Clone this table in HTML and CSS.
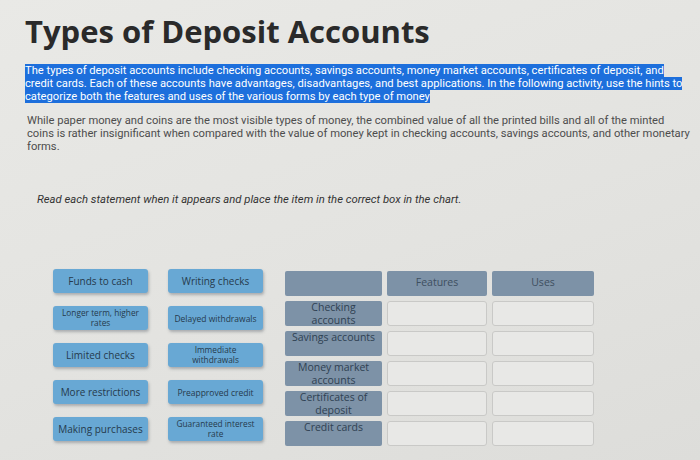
FILE: index.html
```html
<!DOCTYPE html>
<html lang="en">
<head>
<meta charset="utf-8">
<title>Types of Deposit Accounts</title>
<link rel="stylesheet" href="styles.css">
</head>
<body>
<div class="page">
  <h1 class="title">Types of Deposit Accounts</h1>
  <p class="intro"><span class="sel">The types of deposit accounts include checking accounts, savings accounts, money market accounts, certificates of deposit, and<br>credit cards. Each of these accounts have advantages, disadvantages, and best applications. In the following activity, use the hints to<br>categorize both the features and uses of the various forms by each type of money</span></p>
  <p class="body">While paper money and coins are the most visible types of money, the combined value of all the printed bills and all of the minted<br>coins is rather insignificant when compared with the value of money kept in checking accounts, savings accounts, and other monetary<br>forms.</p>
  <p class="instr">Read each statement when it appears and place the item in the correct box in the chart.</p>

  <div class="activity">
    <div class="tiles">
      <div class="tile">Funds to cash</div>
      <div class="tile">Writing checks</div>
      <div class="tile tile-sm">Longer term, higher rates</div>
      <div class="tile tile-md">Delayed withdrawals</div>
      <div class="tile">Limited checks</div>
      <div class="tile tile-sm">Immediate withdrawals</div>
      <div class="tile">More restrictions</div>
      <div class="tile tile-md">Preapproved credit</div>
      <div class="tile">Making purchases</div>
      <div class="tile tile-sm">Guaranteed interest rate</div>
    </div>

    <div class="chart">
      <div class="head"></div>
      <div class="head">Features</div>
      <div class="head">Uses</div>

      <div class="label">Checking accounts</div>
      <div class="slot"></div>
      <div class="slot"></div>

      <div class="label">Savings accounts</div>
      <div class="slot"></div>
      <div class="slot"></div>

      <div class="label">Money market accounts</div>
      <div class="slot"></div>
      <div class="slot"></div>

      <div class="label">Certificates of deposit</div>
      <div class="slot"></div>
      <div class="slot"></div>

      <div class="label">Credit cards</div>
      <div class="slot"></div>
      <div class="slot"></div>
    </div>
  </div>
</div>
</body>
</html>
```

FILE: styles.css
```css
html, body {
  margin: 0;
  padding: 0;
}

body {
  width: 700px;
  height: 460px;
  overflow: hidden;
  background: linear-gradient(160deg, #e9e9e6 0%, #e3e3e0 55%, #dddddA 100%);
  font-family: Roboto, "Liberation Sans", sans-serif;
}

.page {
  padding-left: 25px;
}

.title {
  margin: 12px 0 0 0;
  font-family: "Open Sans", "Liberation Sans", sans-serif;
  font-weight: 700;
  font-size: 31px;
  line-height: 38px;
  color: #2a2a2a;
}

.intro {
  margin: 14px 0 0 0;
  font-size: 11.2px;
  line-height: 13px;
  color: #ffffff;
}

.sel {
  background: #1d6fdc;
}

.body {
  margin: 11px 0 0 2px;
  font-size: 11.2px;
  line-height: 13px;
  color: #4d4d4d;
}

.instr {
  margin: 40px 0 0 12px;
  font-size: 11.3px;
  line-height: 13px;
  font-style: italic;
  color: #333333;
}

.activity {
  display: flex;
  align-items: flex-start;
  margin-top: 63px;
  padding-left: 28px;
}

.tiles {
  display: grid;
  grid-template-columns: 95px 95px;
  grid-auto-rows: 24px;
  column-gap: 20px;
  row-gap: 13px;
}

.tile {
  display: flex;
  align-items: center;
  justify-content: center;
  text-align: center;
  background: #68a8d4;
  border-radius: 3px;
  box-shadow: 1px 2px 3px rgba(60, 70, 80, 0.35);
  font-family: "Open Sans", "Liberation Sans", sans-serif;
  font-size: 10px;
  line-height: 11px;
  color: #263a4c;
  padding: 0 3px;
  white-space: nowrap;
}

.tile-md {
  font-size: 8.5px;
  padding: 0 2px;
}

.tile-sm {
  font-size: 8.3px;
  line-height: 10px;
  padding: 0 7px;
  white-space: normal;
}

.chart {
  display: grid;
  grid-template-columns: 97px 100px 102px;
  grid-auto-rows: 25px;
  column-gap: 5px;
  row-gap: 5px;
  margin-left: 22px;
  margin-top: 2px;
}

.head {
  background: #7d92a7;
  border-radius: 2px;
  display: flex;
  align-items: center;
  justify-content: center;
  font-family: "Open Sans", "Liberation Sans", sans-serif;
  font-size: 10.5px;
  color: #3e4f60;
  padding-bottom: 3px;
}

.label {
  background: #7d92a7;
  border-radius: 2px;
  text-align: center;
  font-family: "Open Sans", "Liberation Sans", sans-serif;
  font-size: 10.5px;
  line-height: 12.5px;
  color: #2f4152;
  padding: 0 4px;
}

.slot {
  background: #e8e8e6;
  border: 1px solid #c9c9c7;
  border-radius: 3px;
}
```
